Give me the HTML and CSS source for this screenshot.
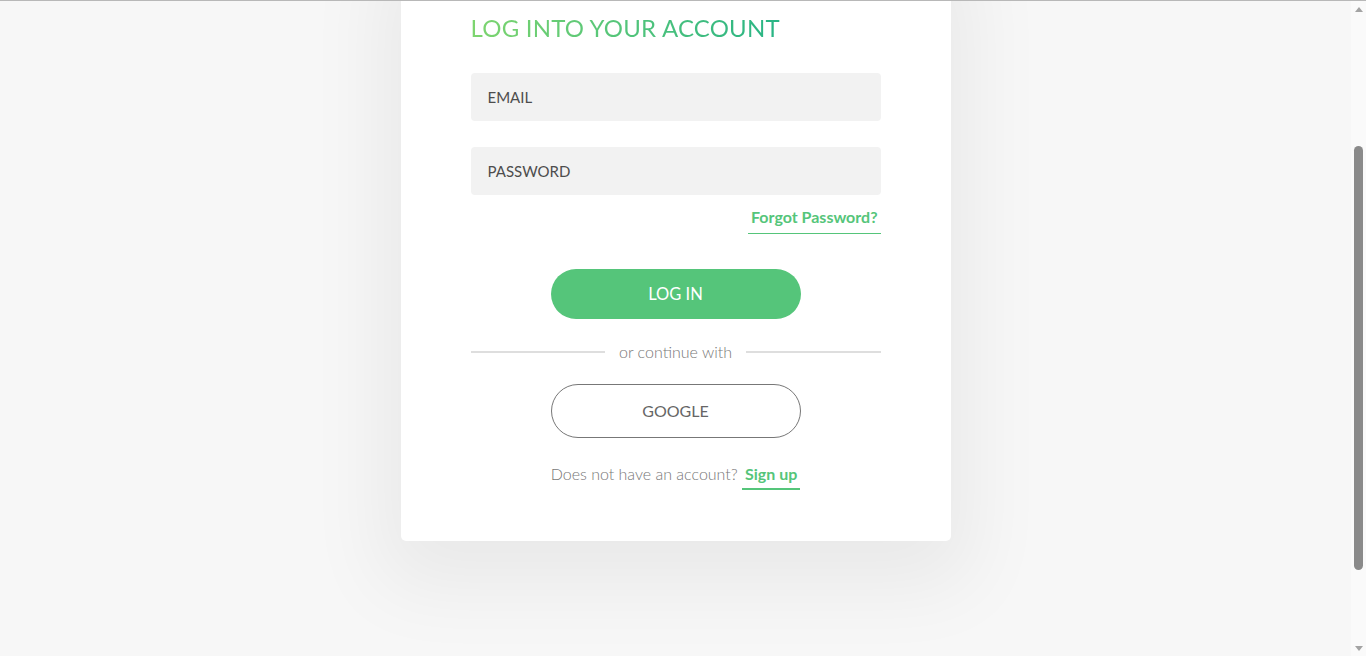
FILE: index.html
```html
<!DOCTYPE html>
<html lang="en">
<head>
<meta charset="utf-8">
<title>Log into your account</title>
<link rel="stylesheet" href="styles.css">
</head>
<body>
<div class="topline"></div>
<div class="scrollbar" aria-hidden="true">
  <div class="sb-btn"><span class="sb-arrow sb-arrow-up"></span></div>
  <div class="sb-track"><div class="sb-thumb"></div></div>
  <div class="sb-btn"><span class="sb-arrow sb-arrow-down"></span></div>
</div>
<main class="page">
  <section class="card">
    <h2 class="title">LOG INTO YOUR ACCOUNT</h2>
    <form class="form">
      <input class="field" type="email" placeholder="EMAIL">
      <input class="field" type="password" placeholder="PASSWORD">
      <div class="forgot-row"><a class="link link-forgot" href="#">Forgot Password?</a></div>
      <div class="actions">
        <button class="btn btn-primary" type="button">LOG IN</button>
      </div>
      <div class="divider"><span class="divider-line"></span><span class="divider-text">or continue with</span><span class="divider-line"></span></div>
      <div class="actions">
        <button class="btn btn-outline" type="button">GOOGLE</button>
      </div>
      <p class="signup">Does not have an account? <a class="link link-signup" href="#">Sign up</a></p>
    </form>
  </section>
</main>
<script src="script.js"></script>
</body>
</html>
```

FILE: styles.css
```css
html {
  scroll-behavior: auto;
}
body {
  margin: 0;
  background: #f7f7f7;
  font-family: "Lato", "Open Sans", Arial, sans-serif;
  color: #777;
}
.topline {
  position: fixed;
  top: 0;
  left: 0;
  right: 0;
  height: 1px;
  background: #b8b8b8;
  z-index: 10;
}
.scrollbar {
  position: fixed;
  top: 1px;
  right: 0;
  bottom: 0;
  width: 15px;
  background: #fafafa;
  display: flex;
  flex-direction: column;
  z-index: 9;
}
.sb-btn {
  height: 16px;
  display: flex;
  align-items: center;
  justify-content: center;
}
.sb-arrow {
  width: 0;
  height: 0;
  border-left: 4px solid transparent;
  border-right: 4px solid transparent;
}
.sb-arrow-up {
  border-bottom: 5px solid #a3a3a3;
}
.sb-arrow-down {
  border-top: 5px solid #a3a3a3;
}
.sb-track {
  flex: 1;
  display: flex;
  flex-direction: column;
  align-items: center;
}
.sb-thumb {
  width: 9px;
  height: 424px;
  margin-top: 129px;
  border-radius: 5px;
  background: #8a8a8a;
}
.page {
  margin-right: 15px;
  padding: 150px 0 221px;
}
.card {
  width: 550px;
  box-sizing: border-box;
  margin: 0 auto;
  padding: 64px 70px 51px;
  background: #fff;
  border-radius: 5px;
  box-shadow: 0 25px 80px 20px rgba(0, 0, 0, 0.06);
}
.title {
  margin: 0 0 30px;
  font-size: 24px;
  line-height: 1.2;
  font-weight: 400;
  letter-spacing: 0.2px;
  display: inline-block;
  background-image: linear-gradient(to right, #7ed56f, #28b485);
  -webkit-background-clip: text;
  background-clip: text;
  color: transparent;
}
.form {
  display: flex;
  flex-direction: column;
}
.field {
  display: block;
  box-sizing: border-box;
  width: 100%;
  height: 48px;
  margin: 0;
  padding: 0 17px;
  border: none;
  border-radius: 4px;
  background: #f2f2f2;
  font-family: inherit;
  font-size: 15px;
  color: #555;
  outline: none;
}
.field + .field {
  margin-top: 26px;
}
.field::placeholder {
  color: #4d4d4d;
  opacity: 1;
}
.forgot-row {
  display: flex;
  justify-content: flex-end;
  margin-top: 6px;
}
.link {
  display: inline-block;
  padding: 3px;
  font-size: 16px;
  font-weight: 700;
  color: #55c57a;
  text-decoration: none;
}
.link-forgot {
  line-height: 26px;
  border-bottom: 1px solid #55c57a;
}
.actions {
  display: flex;
  justify-content: center;
}
.forgot-row + .actions {
  margin-top: 35px;
}
.btn {
  width: 250px;
  box-sizing: border-box;
  font-family: inherit;
  font-size: 17px;
  cursor: pointer;
  padding: 0;
}
.btn-primary {
  height: 50px;
  border: none;
  border-radius: 25px;
  background: #55c57a;
  color: #fff;
  font-size: 16.5px;
}
.btn-outline {
  height: 54px;
  border: 1px solid #777;
  border-radius: 27px;
  background: #fff;
  color: #666;
  font-size: 16px;
}
.divider {
  display: flex;
  align-items: center;
  gap: 14px;
  margin: 23px 0 22px;
  height: 20px;
}
.divider-line {
  flex: 1;
  height: 2px;
  background: #dedede;
}
.divider-text {
  font-size: 16px;
  font-weight: 300;
  color: #777;
  line-height: 20px;
}
.signup {
  margin: 22px 0 0;
  text-align: center;
  font-size: 16px;
  font-weight: 300;
  color: #777;
}
.link-signup {
  line-height: 22px;
  border-bottom: 2px solid #55c57a;
}
```

FILE: script.js
```js
window.scrollTo(0, 200);
```
